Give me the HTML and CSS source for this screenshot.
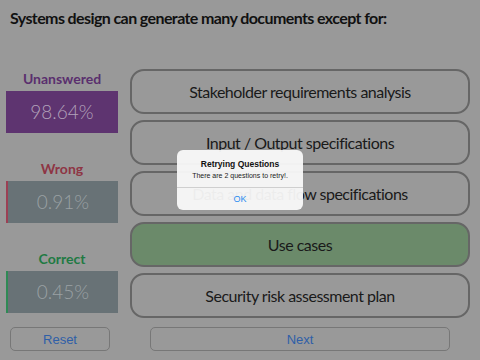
FILE: index.html
```html
<!DOCTYPE html>
<html lang="en">
<head>
    <meta charset="UTF-8">
    <meta name="viewport" content="width=device-width, initial-scale=1.0">
    <title>Quiz</title>
    <link rel="stylesheet" href="styles.css">
</head>
<body>
    <div class="screen">
        <h1 class="question">Systems design can generate many documents except for:</h1>

        <div class="main">
            <div class="stats">
                <div class="stat">
                    <div class="stat-label unanswered">Unanswered</div>
                    <div class="stat-box box-unanswered">98.64%</div>
                </div>
                <div class="stat">
                    <div class="stat-label wrong">Wrong</div>
                    <div class="stat-box box-wrong">0.91%</div>
                </div>
                <div class="stat">
                    <div class="stat-label correct">Correct</div>
                    <div class="stat-box box-correct">0.45%</div>
                </div>
            </div>

            <div class="answers">
                <div class="answer">Stakeholder requirements analysis</div>
                <div class="answer">Input / Output specifications</div>
                <div class="answer">Data and data flow specifications</div>
                <div class="answer selected">Use cases</div>
                <div class="answer">Security risk assessment plan</div>
            </div>
        </div>

        <div class="footer">
            <button class="btn btn-reset">Reset</button>
            <button class="btn btn-next">Next</button>
        </div>

        <!-- alert over the dimmed page -->
        <div class="alert">
            <div class="alert-body">
                <div class="alert-title">Retrying Questions</div>
                <div class="alert-text">There are 2 questions to retry!.</div>
            </div>
            <div class="alert-ok">OK</div>
        </div>
    </div>
</body>
</html>
```

FILE: styles.css
```css
body {
    margin: 0;
    background-color: #999999;
    font-family: "Lato", "Open Sans", sans-serif;
}
.screen {
    position: relative;
    width: 480px;
    height: 360px;
    overflow: hidden;
}
.question {
    margin: 0;
    padding: 8px 10px 0;
    height: 28px;
    font-size: 16px;
    font-weight: bold;
    letter-spacing: -0.6px;
    color: #111;
}
.main {
    display: grid;
    grid-template-columns: 112px 340px;
    column-gap: 12px;
    padding: 33px 0 0 6px;
}
.stats {
    display: flex;
    flex-direction: column;
    gap: 26px;
}
.stat-label {
    height: 22px;
    text-align: center;
    font-size: 14px;
    font-weight: bold;
    line-height: 20px;
}
.unanswered { color: #5a2f6e; }
.wrong { color: #8e3544; }
.correct { color: #1f7a43; }
.stat-box {
    height: 42px;
    line-height: 42px;
    text-align: center;
    font-size: 19px;
    font-weight: 300;
    box-sizing: border-box;
}
.box-unanswered {
    background-color: #5e3470;
    color: #b3a3bb;
}
.box-wrong {
    background-color: #687276;
    color: #9aa1a4;
    border-left: 2px solid #9c4054;
}
.box-correct {
    background-color: #687276;
    color: #9aa1a4;
    border-left: 2px solid #2f8a55;
}
.answers {
    display: flex;
    flex-direction: column;
    gap: 6px;
}
.answer {
    height: 45px;
    box-sizing: border-box;
    border: 2px solid #666;
    border-radius: 14px;
    text-align: center;
    line-height: 41px;
    font-size: 16px;
    letter-spacing: -0.5px;
    color: #1a1a1a;
}
.selected {
    background-color: #6b8a6a;
}
.footer {
    display: flex;
    padding: 9px 0 0 10px;
}
.btn {
    height: 24px;
    border: 1px solid #777;
    border-radius: 5px;
    background: transparent;
    color: #2f5fa8;
    font-family: "Liberation Sans", Arial, sans-serif;
    font-size: 13px;
    padding: 0;
}
.btn-reset {
    width: 100px;
}
.btn-next {
    width: 300px;
    margin-left: 40px;
}
.alert {
    position: absolute;
    left: 177px;
    top: 150px;
    width: 126px;
    height: 60px;
    background-color: rgba(250, 250, 250, 0.94);
    border-radius: 6px;
    font-family: "Liberation Sans", Arial, sans-serif;
    text-align: center;
}
.alert-body {
    height: 38px;
    border-bottom: 1px solid #cfcfcf;
    box-sizing: border-box;
    padding-top: 9px;
}
.alert-title {
    font-size: 8.5px;
    font-weight: bold;
    color: #111;
}
.alert-text {
    margin-top: 3px;
    font-size: 7px;
    color: #222;
}
.alert-ok {
    height: 22px;
    line-height: 22px;
    font-size: 9px;
    color: #2a8cf0;
}
```
